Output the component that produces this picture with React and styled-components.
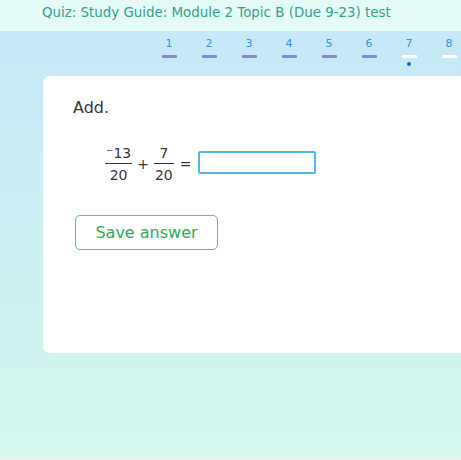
import React from 'react';
import styled, { createGlobalStyle } from 'styled-components';

const GlobalStyle = createGlobalStyle`
  html, body {
    margin: 0;
    padding: 0;
    background: #efefef;
  }
  body {
    font-family: 'DejaVu Sans', Verdana, sans-serif;
  }
`;

const Page = styled.div`
  width: 461px;
  height: 457px;
  overflow: hidden;
  display: flex;
  flex-direction: column;
  background: linear-gradient(to bottom, #c5e7f8 0%, #d0f3f0 70%, #d4f7ee 100%);
`;

const TitleBar = styled.div`
  height: 31px;
  box-sizing: border-box;
  flex-shrink: 0;
  background: #e5fbf8;
  display: flex;
  align-items: center;
  padding: 0 0 7px 42px;
  color: #31a08e;
  font-size: 13.4px;
`;

const Nav = styled.div`
  height: 45px;
  flex-shrink: 0;
  display: flex;
  padding-left: 152px;
`;

const NavItem = styled.div`
  width: 34px;
  margin-right: 6px;
  flex-shrink: 0;
  display: flex;
  flex-direction: column;
  align-items: center;
  padding-top: 6px;
`;

const NavNum = styled.span`
  font-size: 11px;
  line-height: 13px;
  color: #3d8fd8;
`;

const NavBar = styled.span`
  margin-top: 5px;
  width: 15px;
  height: 3px;
  border-radius: 1px;
  background: ${({ $done }) => ($done ? '#8585ea' : '#ffffff')};
`;

const Dot = styled.span`
  margin-top: 4px;
  width: 4px;
  height: 4px;
  border-radius: 50%;
  background: #1767c4;
`;

const Card = styled.div`
  margin-left: 43px;
  width: 440px;
  height: 277px;
  background: #fff;
  border-radius: 7px;
  padding: 22px 0 0 30px;
  box-sizing: border-box;
`;

const Prompt = styled.div`
  font-size: 16px;
  color: #333;
`;

const Equation = styled.div`
  display: flex;
  align-items: center;
  margin: 28px 0 0 32px;
  font-size: 14px;
  color: #333;
`;

const Fraction = styled.div`
  display: inline-flex;
  flex-direction: column;
  align-items: center;
`;

const Numer = styled.span`
  padding: 0 1px 2px;
  border-bottom: 1px solid #333;
  line-height: 16px;
`;

const Denom = styled.span`
  padding-top: 3px;
  line-height: 16px;
`;

const Op = styled.span`
  margin: 0 ${({ $right }) => $right}px 0 ${({ $left }) => $left}px;
`;

const AnswerBox = styled.div`
  width: 114px;
  height: 19px;
  margin-bottom: 3px;
  border: 2px solid #4fb4ee;
  border-radius: 2px;
`;

const SaveButton = styled.div`
  margin-top: 32px;
  margin-left: 2px;
  width: 143px;
  height: 35px;
  box-sizing: border-box;
  display: flex;
  align-items: center;
  justify-content: center;
  background: #fff;
  border: 1px solid #5cc480;
  border-radius: 5px;
  color: #2faa5b;
  font-size: 16px;
  cursor: pointer;
`;

const items = [1, 2, 3, 4, 5, 6, 7, 8];

export default function App() {
  return (
    <>
      <GlobalStyle />
      <Page>
        <TitleBar>Quiz: Study Guide: Module 2 Topic B (Due 9-23) test</TitleBar>
        <Nav>
          {items.map((n) => (
            <NavItem key={n}>
              <NavNum>{n}</NavNum>
              <NavBar $done={n < 7} />
              {n === 7 && <Dot />}
            </NavItem>
          ))}
        </Nav>
        <Card>
          <Prompt>Add.</Prompt>
          <Equation>
            <Fraction>
              <Numer>⁻13</Numer>
              <Denom>20</Denom>
            </Fraction>
            <Op $left={5} $right={5}>+</Op>
            <Fraction>
              <Numer>&nbsp;7&nbsp;</Numer>
              <Denom>20</Denom>
            </Fraction>
            <Op $left={6} $right={6}>=</Op>
            <AnswerBox />
          </Equation>
          <SaveButton role="button">Save answer</SaveButton>
        </Card>
      </Page>
    </>
  );
}
